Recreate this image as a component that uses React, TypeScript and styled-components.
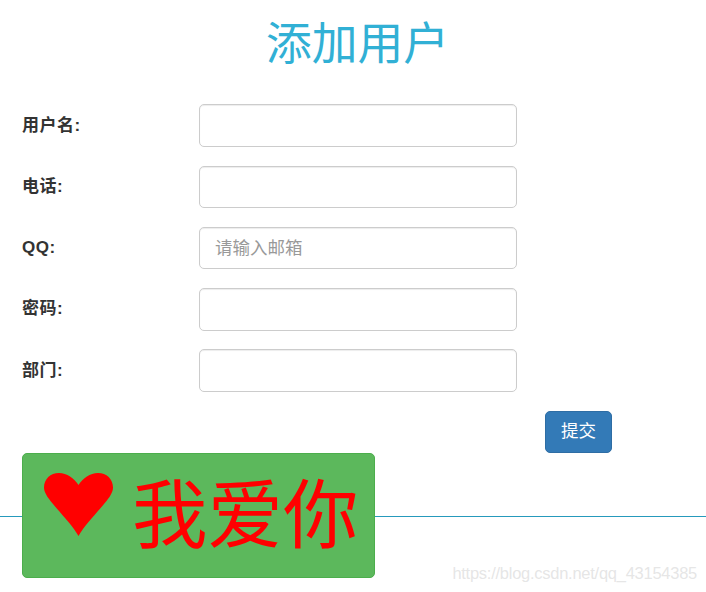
import React from "react";
import styled, { createGlobalStyle } from "styled-components";

const Global = createGlobalStyle`
  html, body { margin: 0; padding: 0; background: #fff; }
  body { font-family: "Liberation Sans", "Noto Sans CJK SC", sans-serif; color: #333; }
  * { box-sizing: border-box; }
`;

const Page = styled.div`
  position: relative;
  width: 706px;
  height: 592px;
  overflow: hidden;
`;

const Title = styled.h1`
  margin: 0;
  height: 104.4px;
  padding: 15px 0 0 9px;
  font-size: 45.8px;
  line-height: 60px;
  font-weight: 400;
  text-align: center;
  color: #31b0d5;
`;

const Form = styled.form`
  display: flex;
  flex-direction: column;
  gap: 18.75px;
  padding-left: 22px;
`;

const Row = styled.div`
  display: flex;
  align-items: center;
  height: 42.5px;
`;

const Label = styled.label`
  width: 177px;
  font-size: 17px;
  line-height: 24px;
  letter-spacing: 0.5px;
  font-weight: 700;
  color: #333;
`;

const Input = styled.input`
  width: 318px;
  height: 100%;
  padding: 1px 15px 0;
  border: 1px solid #ccc;
  border-radius: 5px;
  box-shadow: inset 0 1px 1px rgba(0, 0, 0, 0.075);
  font-family: inherit;
  font-size: 17.5px;
  outline: none;
  &::placeholder { color: #999; }
`;

const ButtonRow = styled.div`
  display: flex;
  padding-left: 523px;
  height: 42px;
`;

const Submit = styled.button`
  width: 67px;
  height: 42px;
  padding: 0 0 5px;
  background: #337ab7;
  border: 1px solid #2e6da4;
  border-radius: 5px;
  color: #fff;
  font-family: inherit;
  font-size: 17.5px;
`;

const Band = styled.div`
  position: relative;
  padding-left: 22px;
  &::before {
    content: "";
    position: absolute;
    left: 0;
    right: 0;
    top: 63px;
    height: 1px;
    background: #269abc;
  }
`;

const Love = styled.div`
  position: relative;
  display: flex;
  align-items: center;
  width: 353px;
  height: 125px;
  padding: 3px 0 0 21px;
  background: #5cb85c;
  border: 1px solid #4cae4c;
  border-radius: 5px;
  color: #f00;
  font-size: 75.5px;
  line-height: 1;
`;

const Heart = styled.svg`
  width: 69px;
  height: 63px;
  margin: -24px 19px 0 0;
  flex: none;
  fill: #f00;
`;

const Watermark = styled.div`
  position: absolute;
  right: 9px;
  bottom: 9px;
  font-size: 16.5px;
  letter-spacing: -0.26px;
  color: rgba(215, 215, 215, 0.65);
`;

export default function App() {
  const rows: [string, string?][] = [
    ["用户名:"],
    ["电话:"],
    ["QQ:", "请输入邮箱"],
    ["密码:"],
    ["部门:"],
  ];
  return (
    <Page>
      <Global />
      <Title>添加用户</Title>
      <Form>
        {rows.map(([label, placeholder]) => (
          <Row key={label}>
            <Label>{label}</Label>
            <Input placeholder={placeholder} />
          </Row>
        ))}
        <ButtonRow>
          <Submit type="button">提交</Submit>
        </ButtonRow>
      </Form>
      <Band>
        <Love>
          <Heart viewBox="0 0 69 63" aria-hidden="true">
            <path d="M34.5 63C29 53 18 42 9 31C3 24 0 19 0 14.5C0 6 6.500 0 15 0C23 0 30 5 34.500 12C39 5 46 0 54 0C62.500 0 69 6 69 14.500C69 19 66 24 60 31C51 42 40 53 34.500 63Z" />
          </Heart>
          我爱你
        </Love>
      </Band>
      <Watermark>https://blog.csdn.net/qq_43154385</Watermark>
    </Page>
  );
}
